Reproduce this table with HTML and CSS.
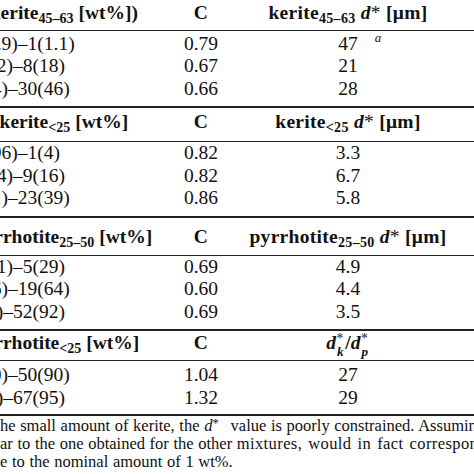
FILE: index.html
```html
<!DOCTYPE html>
<html lang="en">
<head>
<meta charset="utf-8">
<title>Table</title>
<link rel="stylesheet" href="styles.css">
</head>
<body>
<div class="page">
  <table class="tbl">
    <colgroup><col class="c1"><col class="c2"><col class="c3"><col class="c4"></colgroup>
    <tbody class="blk b1">
      <tr class="hd"><th>(pyrrhotite–kerite<sub>45–63</sub> [wt%])</th><th>C</th><th>kerite<sub>45–63</sub> <i>d</i><span class="ast">*</span> [μm]</th><th></th></tr>
      <tr><td>99(98.9)–1(1.1)</td><td>0.79</td><td>47<span class="fnm"><i>a</i></span></td><td></td></tr>
      <tr><td>92(82)–8(18)</td><td>0.67</td><td>21</td><td></td></tr>
      <tr><td>70(54)–30(46)</td><td>0.66</td><td>28</td><td></td></tr>
    </tbody>
    <tbody class="blk b2">
      <tr class="hd"><th>(pyrrhotite–kerite<sub>&lt;25</sub> [wt%]</th><th>C</th><th>kerite<sub>&lt;25</sub> <i>d</i><span class="ast">*</span> [μm]</th><th></th></tr>
      <tr><td>99(96)–1(4)</td><td>0.82</td><td>3.3</td><td></td></tr>
      <tr><td>91(84)–9(16)</td><td>0.82</td><td>6.7</td><td></td></tr>
      <tr><td>77(61)–23(39)</td><td>0.86</td><td>5.8</td><td></td></tr>
    </tbody>
    <tbody class="blk b3">
      <tr class="hd"><th>(kerite<sub>45–63</sub>–pyrrhotite<sub>25–50</sub> [wt%]</th><th>C</th><th>pyrrhotite<sub>25–50</sub> <i>d</i><span class="ast">*</span> [μm]</th><th></th></tr>
      <tr><td>95(71)–5(29)</td><td>0.69</td><td>4.9</td><td></td></tr>
      <tr><td>81(36)–19(64)</td><td>0.60</td><td>4.4</td><td></td></tr>
      <tr><td>48(8)–52(92)</td><td>0.69</td><td>3.5</td><td></td></tr>
    </tbody>
    <tbody class="blk b4">
      <tr class="hd"><th>(kerite<sub>&lt;25</sub>–pyrrhotite<sub>&lt;25</sub> [wt%]</th><th>C</th><th><i>d</i><sup class="st">*</sup><sub class="ix"><i>k</i></sub>/<i>d</i><sup class="st">*</sup><sub class="ix"><i>p</i></sub></th><th></th></tr>
      <tr><td>50(10)–50(90)</td><td>1.04</td><td>27</td><td></td></tr>
      <tr><td>33(5)–67(95)</td><td>1.32</td><td>29</td><td></td></tr>
    </tbody>
  </table>
  <div class="note">
    <div class="ln">he small amount of kerite, the <i>d</i><span class="nast">*</span>value is poorly constrained. Assuming</div>
    <div class="ln">ar to the one obtained for the other <span class="wide">mixtures, would in fact correspond</span></div>
    <div class="ln">e to the nominal amount of 1 wt%.</div>
  </div>
</div>
</body>
</html>
```
FILE: styles.css
```css
html, body {
  margin: 0;
  padding: 0;
  background: #ffffff;
}
body {
  font-family: "Liberation Serif", "Times New Roman", serif;
  color: #111111;
}
.page {
  width: 474px;
  height: 474px;
  overflow: hidden;
}
.tbl {
  border-collapse: separate;
  border-spacing: 0;
  table-layout: fixed;
  width: 760px;
  margin-left: -137px;
  font-size: 19.5px;
}
.c1 { width: 300px; }
.c2 { width: 76px; }
.c3 { width: 218px; }
.c4 { width: 166px; }
.tbl th, .tbl td {
  padding: 0;
  text-align: center;
  white-space: nowrap;
  line-height: 22.5px;
  vertical-align: middle;
}
.tbl th {
  font-weight: bold;
  line-height: 23px;
  border-bottom: 1.5px solid #222;
  letter-spacing: 0.3px;
}
.tbl th:first-child {
  letter-spacing: 0;
}
.blk + .blk .hd th {
  border-top: 2px solid #222;
}
.b4 tr:last-child td {
  border-bottom: 2px solid #222;
}
sub {
  font-size: 0.72em;
  line-height: 0;
  vertical-align: -0.32em;
}
.ast {
  font-weight: normal;
}
.fnm {
  display: inline-block;
  width: 0;
  font-size: 0.66em;
  line-height: 0;
  vertical-align: 0.55em;
  text-indent: 17px;
}
.st {
  font-size: 0.7em;
  font-weight: normal;
  line-height: 0;
  vertical-align: 0.45em;
}
.ix {
  font-size: 0.68em;
  line-height: 0;
  vertical-align: -0.5em;
  margin-left: -0.5em;
  margin-right: 0.1em;
}

/* header padding per block */
.b1 .hd th { padding: 1px 0 5.5px; }
.b2 .hd th { padding: 1.5px 0 8.5px; }
.b3 .hd th { padding: 7px 0 7px; }
.b4 .hd th { padding: 0 0 6px; }

/* data row padding */
.b1 tr:nth-child(2) td { padding-top: 2px; }
.b4 tr:nth-child(2) td { padding-top: 3px; }
.blk tr:last-child td { padding-bottom: 6px; }
.b4 tr:last-child td { padding-bottom: 5px; }

.note {
  font-size: 16.5px;
  line-height: 18px;
  padding-top: 1px;
  word-spacing: 0.5px;
}
.ln {
  white-space: nowrap;
}
.wide {
  letter-spacing: 0.4px;
  word-spacing: 1.5px;
}
.nast {
  font-size: 0.75em;
  vertical-align: 0.35em;
  line-height: 0;
  margin-right: 12px;
}
```
